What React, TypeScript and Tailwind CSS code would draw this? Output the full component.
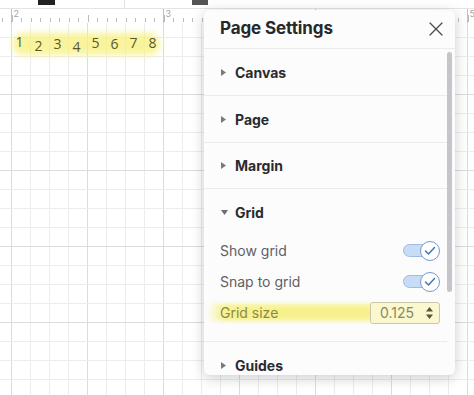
import { X } from 'lucide-react'

const digitOffsets = ['mt-0', 'mt-[4px]', 'mt-[2px]', 'mt-[5px]', 'mt-[1px]', 'mt-[2px]', 'mt-[1px]', 'mt-[1px]']

const TopBar = () => (
  <div className="flex h-[9px] shrink-0 border-b border-[#e4e4e6] bg-white">
    <div className="ml-[38px] h-[5px] w-[17px] bg-[#222]" />
    <div className="ml-[69px] h-full w-px bg-[#e2e2e4]" />
    <div className="ml-[67px] h-[5px] w-[16px] bg-[#555]" />
  </div>
)

const Ruler = () => {
  const ticks = Array.from({ length: 50 }, (_, i) => 2.2 + i * 9.5)
  const inches = [
    { x: 11.5, label: '2' },
    { x: 163.5, label: '3' },
    { x: 315.5, label: '4' },
    { x: 467.5, label: '5' },
  ]
  return (
    <div className="relative z-10 h-[14px] shrink-0 bg-white">
      <svg width="474" height="14" className="block">
        {ticks.map((x, i) => {
          const half = Math.abs(((x - 11.7) % 76 + 76) % 76) < 1
          return (
            <line
              key={i}
              x1={Math.round(x) + 0.5}
              x2={Math.round(x) + 0.5}
              y1={half ? 6 : 9}
              y2={13}
              stroke="#bcbcc0"
              strokeWidth="1"
            />
          )
        })}
        {inches.map((m) => (
          <g key={m.label}>
            <line x1={m.x} x2={m.x} y1={0} y2={14} stroke="#c0c0c4" strokeWidth="1" />
            <text x={m.x + 2} y={8} fontSize="9" fill="#a4a4a8" fontFamily="Inter, sans-serif">
              {m.label}
            </text>
          </g>
        ))}
      </svg>
    </div>
  )
}

const GridCanvas = () => {
  const top = 23
  const vLines = Array.from({ length: 26 }, (_, k) => ({ x: 11.5 + k * 19, major: k % 4 === 0 }))
  const hLines = Array.from({ length: 22 }, (_, k) => ({ y: 18.5 + k * 19 - top, major: k % 4 === 0 })).filter(
    (l) => l.y > 0,
  )
  return (
    <div className="relative flex-1">
      <svg width="474" height="372" className="absolute inset-0">
        {vLines.map((l, i) => (
          <line key={`v${i}`} x1={l.x} x2={l.x} y1={0} y2={372} stroke={l.major ? '#dcdcdf' : '#ececee'} />
        ))}
        {hLines.map((l, i) => (
          <line key={`h${i}`} x1={0} x2={474} y1={l.y} y2={l.y} stroke={l.major ? '#dcdcdf' : '#ececee'} />
        ))}
      </svg>

      <div className="relative ml-[10px] mt-[12px] flex w-[152px] font-['Open_Sans',sans-serif] text-[14px] leading-[14px] text-[#5a582c]">
        <div className="absolute left-[2px] top-[-2px] h-[22px] w-[148px] rounded-full bg-[#f7f17c] opacity-75 blur-[3px]" />
        {digitOffsets.map((mt, i) => (
          <span key={i} className={`relative w-[19px] text-center ${mt}`}>
            {i + 1}
          </span>
        ))}
      </div>
    </div>
  )
}

const Caret = ({ open }: { open?: boolean }) =>
  open ? (
    <svg width="7" height="5" viewBox="0 0 7 5">
      <polygon points="0,0 7,0 3.5,5" fill="#6e6e72" />
    </svg>
  ) : (
    <svg width="5" height="7" viewBox="0 0 5 7">
      <polygon points="0,0 5,3.5 0,7" fill="#7a7a7e" />
    </svg>
  )

const SectionRow = ({ title, open, h }: { title: string; open?: boolean; h: string }) => (
  <div className={`flex items-center gap-[10px] pl-[17px] ${h}`}>
    <div className="flex w-[7px] justify-start">
      <Caret open={open} />
    </div>
    <span className="-ml-[3px] text-[14px] font-bold text-[#2b2b2f]">{title}</span>
  </div>
)

const Toggle = () => (
  <div className="flex items-center">
    <div className="h-[13px] w-[28px] rounded-full border border-[#9ebbe4] bg-[#c8dcf5]" />
    <div className="-ml-[11px] flex h-[20px] w-[20px] items-center justify-center rounded-full border-[1.5px] border-[#7399cf] bg-white">
      <svg width="12" height="10" viewBox="0 0 12 10">
        <polyline points="1.5,5 4.5,8 10.5,1.5" fill="none" stroke="#4673b7" strokeWidth="1.5" strokeLinecap="round" strokeLinejoin="round" />
      </svg>
    </div>
  </div>
)

const Stepper = () => (
  <div className="flex h-[22px] w-[70px] items-center justify-between rounded-[3px] border border-[#cac8a8] bg-[#fbf8cf] pl-[9px] pr-[6px]">
    <span className="text-[14px] text-[#8b895a]">0.125</span>
    <svg width="7" height="12" viewBox="0 0 7 12">
      <polygon points="3.5,0 7,4.5 0,4.5" fill="#57553a" />
      <polygon points="0,7.5 7,7.5 3.5,12" fill="#57553a" />
    </svg>
  </div>
)

const PageSettings = () => (
  <div className="absolute left-[204px] top-[10px] z-20 flex h-[365px] w-[251px] flex-col overflow-hidden rounded-[6px] bg-[#fcfcfd] shadow-[0_3px_14px_rgba(0,0,0,0.2)]">
    <div className="flex h-[39px] shrink-0 items-center justify-between border-b border-[#ececee] pl-4 pr-[7px]">
      <span className="text-[17px] font-bold tracking-[-0.1px] text-[#28282c]">Page Settings</span>
      <X size={24} strokeWidth={1.3} className="text-[#4a4a4e]" />
    </div>

    <div className="flex min-h-0 flex-1">
      <div className="flex-1">
        <div className="border-b border-[#ececee]">
          <SectionRow title="Canvas" h="h-[46px]" />
        </div>
        <div className="border-b border-[#ececee]">
          <SectionRow title="Page" h="h-[46px]" />
        </div>
        <div className="border-b border-[#ececee]">
          <SectionRow title="Margin" h="h-[45px]" />
        </div>
        <div className="border-b border-[#ececee] pb-[13px]">
          <SectionRow title="Grid" open h="h-[46px]" />
          <div className="flex h-[31px] items-center justify-between pl-4 pr-[7px]">
            <span className="text-[14px] text-[#606064]">Show grid</span>
            <Toggle />
          </div>
          <div className="flex h-[31px] items-center justify-between pl-4 pr-[7px]">
            <span className="text-[14px] text-[#606064]">Snap to grid</span>
            <Toggle />
          </div>
          <div className="relative flex h-[31px] items-center justify-between pl-4 pr-[7px]">
            <div className="absolute left-[3px] right-[70px] top-[7px] h-[17px] bg-gradient-to-r from-[#f6f07a]/0 via-[#f6f07a] via-[10%] to-[#f6f07a] opacity-85 blur-[2px]" />
            <span className="relative text-[14px] text-[#8a884f]">Grid size</span>
            <div className="relative">
              <Stepper />
            </div>
          </div>
        </div>
        <SectionRow title="Guides" h="h-[46px]" />
      </div>
      <div className="w-[8px] shrink-0">
        <div className="mt-[3px] h-[240px] w-[5px] rounded-full bg-[#c6c6ca]" />
      </div>
    </div>
  </div>
)

export default function App() {
  return (
    <div className="relative flex h-[395px] w-[474px] flex-col overflow-hidden bg-white font-['Inter',sans-serif]">
      <TopBar />
      <Ruler />
      <GridCanvas />
      <PageSettings />
    </div>
  )
}
